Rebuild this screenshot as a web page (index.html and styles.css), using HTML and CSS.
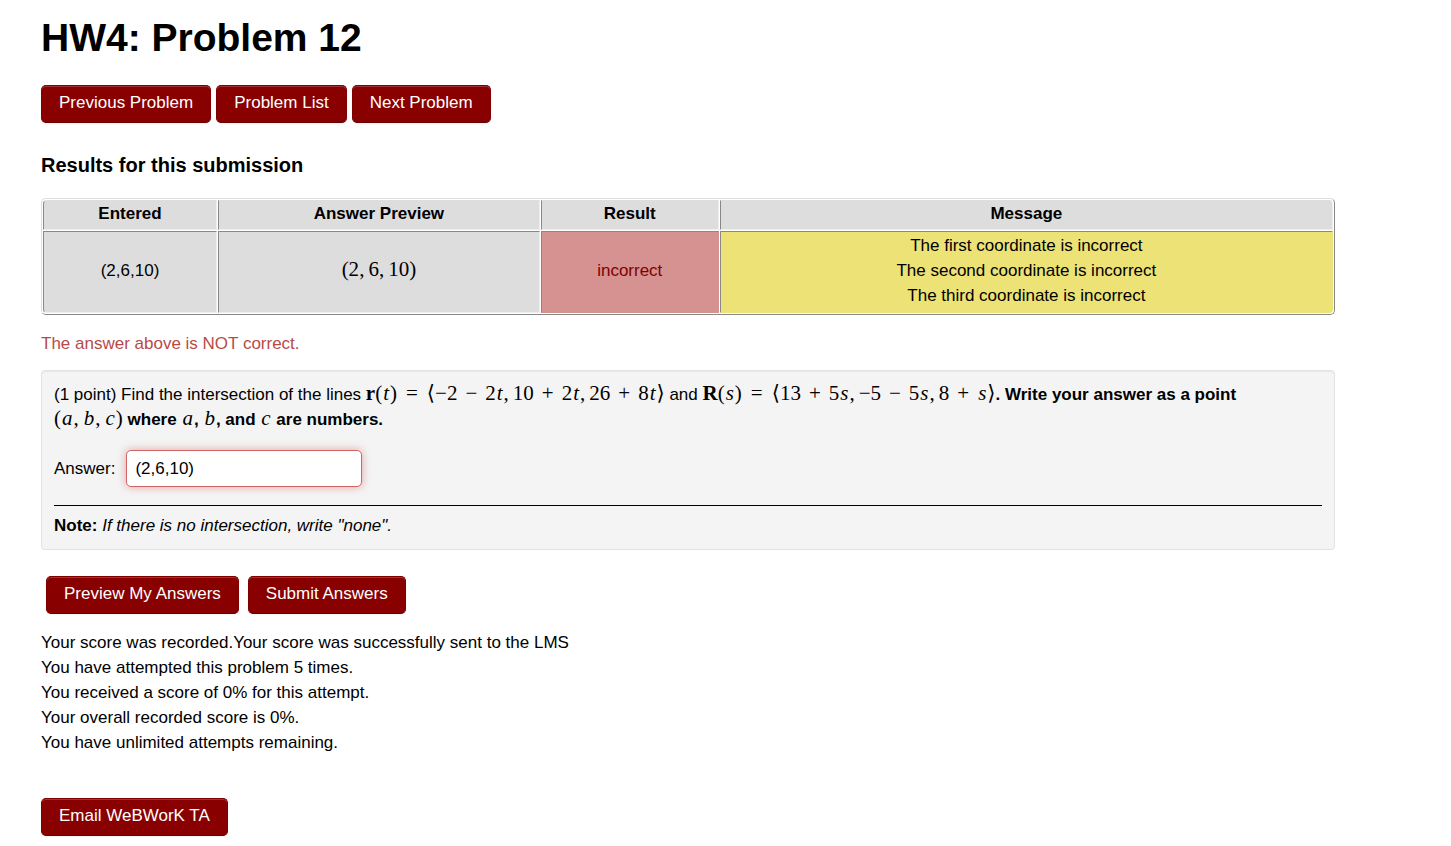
FILE: index.html
```
<!DOCTYPE html>
<html lang="en">
<head>
    <meta charset="UTF-8">
    <meta name="viewport" content="width=device-width, initial-scale=1.0">
    <title>HW4: Problem 12</title>
    <link rel="stylesheet" href="styles.css">
</head>
<body>
    <main class="page">
        <h1 class="page-title">HW4: Problem 12</h1>

        <nav class="problem-nav">
            <a class="btn" href="#">Previous Problem</a>
            <a class="btn" href="#">Problem List</a>
            <a class="btn" href="#">Next Problem</a>
        </nav>

        <h3 class="results-title">Results for this submission</h3>
        <table class="results">
            <colgroup>
                <col class="col-entered">
                <col class="col-preview">
                <col class="col-result">
                <col>
            </colgroup>
            <thead>
                <tr>
                    <th scope="col">Entered</th>
                    <th scope="col">Answer Preview</th>
                    <th scope="col">Result</th>
                    <th scope="col">Message</th>
                </tr>
            </thead>
            <tbody>
                <tr>
                    <td>(2,6,10)</td>
                    <td><span class="math">(2<span class="sep">,</span>6<span class="sep">,</span>10)</span></td>
                    <td class="incorrect">incorrect</td>
                    <td class="message">The first coordinate is incorrect<br>The second coordinate is incorrect<br>The third coordinate is incorrect</td>
                </tr>
            </tbody>
        </table>
        <p class="feedback">The answer above is NOT correct.</p>

        <form class="problem-form" action="#" method="post">
            <section class="problem">
                <p class="statement">(1 point) Find the intersection of the lines
                    <span class="math"><b>r</b>(<i>t</i>)<span class="rel">=</span>⟨−2<span class="op">−</span>2<i>t</i><span class="sep">,</span>10<span class="op">+</span>2<i>t</i><span class="sep">,</span>26<span class="op">+</span>8<i>t</i>⟩</span>
                    and
                    <span class="math"><b>R</b>(<i>s</i>)<span class="rel">=</span>⟨13<span class="op">+</span>5<i>s</i><span class="sep">,</span>−5<span class="op">−</span>5<i>s</i><span class="sep">,</span>8<span class="op">+</span><i>s</i>⟩</span><strong>. Write your answer as a point<br>
                    <span class="math">(<i>a</i><span class="sep">,</span><i>b</i><span class="sep">,</span><i>c</i>)</span>
                    where <span class="math"><i>a</i></span>, <span class="math"><i>b</i></span>, and <span class="math"><i>c</i></span> are numbers.</strong></p>

                <div class="answer">
                    <label for="answer1">Answer:</label>
                    <input type="text" id="answer1" name="answer1" value="(2,6,10)">
                </div>

                <hr>
                <p><strong>Note:</strong> <em>If there is no intersection, write "none".</em></p>
            </section>

            <div class="submit-buttons">
                <button class="btn" type="button">Preview My Answers</button>
                <button class="btn" type="submit">Submit Answers</button>
            </div>
        </form>

        <p class="score">Your score was recorded.Your score was successfully sent to the LMS<br>
            You have attempted this problem 5 times.<br>
            You received a score of 0% for this attempt.<br>
            Your overall recorded score is 0%.<br>
            You have unlimited attempts remaining.</p>

        <button class="btn" type="button">Email WeBWorK TA</button>
    </main>
</body>
</html>
```
FILE: styles.css
```
* {
    box-sizing: border-box;
}

body {
    margin: 0;
    background: #fff;
    color: #000;
    font-family: "Liberation Sans", Arial, Helvetica, sans-serif;
    font-size: 17px;
    line-height: 25px;
}

p {
    margin: 0;
}

.page {
    padding: 13px 116px 10px 41px;
}

.page-title {
    margin: 0 0 22px;
    font-size: 39px;
    line-height: 50px;
}

/* Buttons */
.btn {
    display: inline-block;
    padding: 5px 17px 7px;
    border: 1px solid #800000;
    border-bottom-color: #6a0000;
    border-radius: 5px;
    background: #880000;
    box-shadow: inset 0 1px 0 rgba(255, 255, 255, 0.2), 0 1px 2px rgba(0, 0, 0, 0.05);
    color: #fff;
    font-family: inherit;
    font-size: 17px;
    line-height: 24px;
    text-decoration: none;
    cursor: pointer;
}

.btn:hover {
    background: #700000;
}

.problem-nav {
    display: flex;
    flex-wrap: wrap;
    gap: 5px;
}

/* Results table */
.results-title {
    margin: 30px 0 20px;
    font-size: 20px;
    line-height: 25px;
}

.results {
    width: 100%;
    border: 1px solid;
    border-color: #ddd #888 #888 #ddd;
    border-radius: 5px;
    border-spacing: 1px;
    text-align: center;
}

.results th,
.results td {
    padding: 1px 2px 4px;
    border: 1px solid;
    border-color: #888 #eee #eee #888;
    background: #ddd;
}

.results th {
    padding: 0 2px 3px;
    border-top-color: #ddd;
}

.results th:first-child {
    border-top-left-radius: 4px;
}

.results th:last-child {
    border-top-right-radius: 4px;
}

.results td:first-child {
    border-bottom-left-radius: 4px;
}

.results td:last-child {
    border-bottom-right-radius: 4px;
}

.col-entered {
    width: 174px;
}

.col-preview {
    width: 25%;
}

.col-result {
    width: 178px;
}

.results .incorrect {
    border-right-color: #d69191;
    border-bottom-color: #d69191;
    background: #d69191;
    color: #800000;
}

.results .message {
    border-right-color: #ede275;
    border-bottom-color: #ede275;
    background: #ede275;
}

.feedback {
    margin: 16px 0 14px;
    color: #b94a48;
}

/* Problem body */
.problem {
    padding: 11px 12px;
    border: 1px solid #e3e3e3;
    border-radius: 4px;
    background: #f4f4f4;
    box-shadow: inset 0 1px 1px rgba(0, 0, 0, 0.05);
}

.math {
    font-family: "Liberation Serif", "DejaVu Serif", serif;
    font-size: 21px;
    font-weight: normal;
    line-height: 20px;
    white-space: nowrap;
}

.math i {
    padding: 0 1px;
}

.math .sep {
    padding-right: 4px;
}

.math .op {
    padding: 0 8px;
}

.math .rel {
    padding: 0 9px;
}

.answer {
    display: flex;
    align-items: center;
    gap: 11px;
    margin: 18px 0;
}

.answer input {
    width: 236px;
    height: 37px;
    padding: 5px 8px;
    border: 1px solid #d06565;
    border-radius: 5px;
    background: #fff;
    box-shadow: 0 0 8px rgba(208, 80, 80, 0.5);
    color: #000;
    font-family: inherit;
    font-size: 17px;
}

.problem hr {
    margin: 0 0 7px;
    border: 0;
    border-top: 1px solid #000;
}

.submit-buttons {
    display: flex;
    flex-wrap: wrap;
    gap: 9px;
    margin: 26px 5px 16px;
}

.score {
    margin-bottom: 43px;
}
```
